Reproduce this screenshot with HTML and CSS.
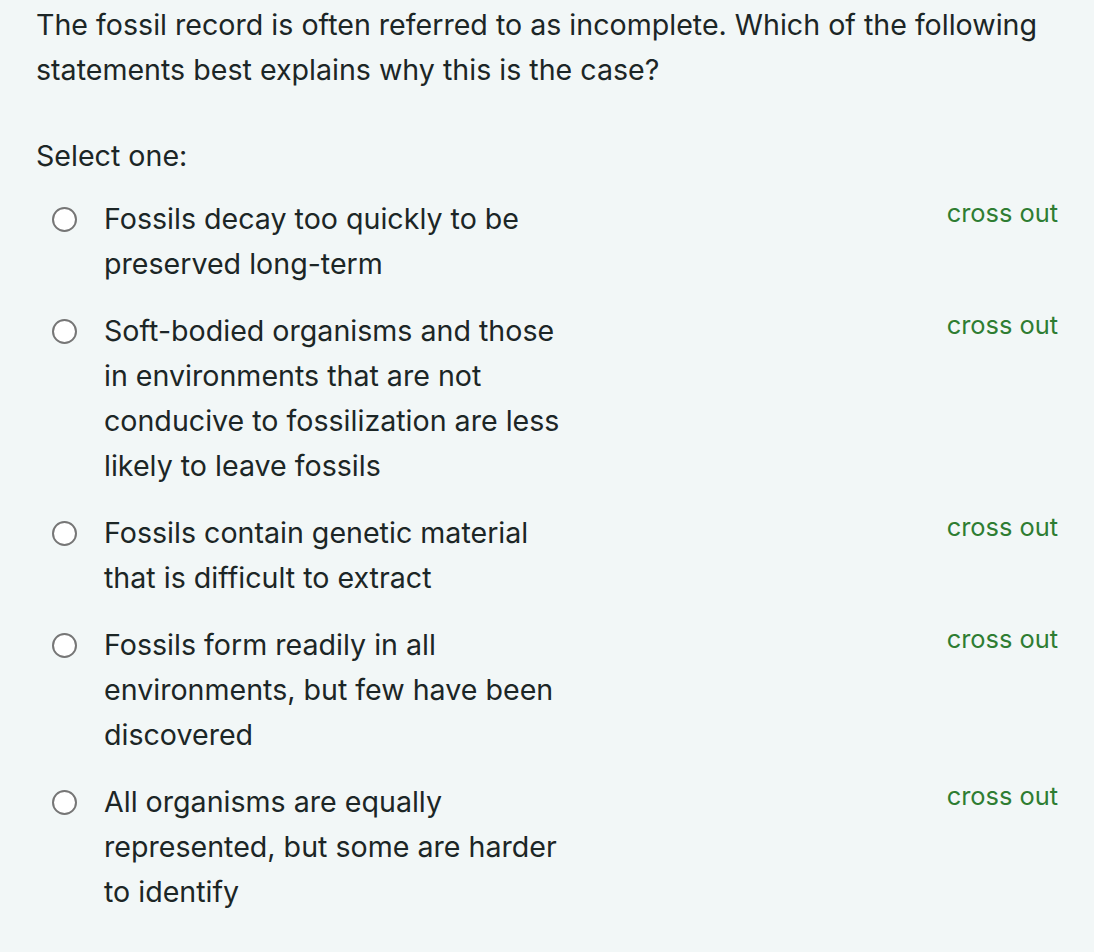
FILE: index.html
```html
<!DOCTYPE html>
<html>
<head>
<meta charset="utf-8">
<link rel="stylesheet" href="styles.css">
</head>
<body>
<div class="que">
  <div class="qtext">The fossil record is often referred to as incomplete. Which of the following statements best explains why this is the case?</div>
  <div class="prompt">Select one:</div>
  <div class="answers">
    <div class="opt">
      <span class="radio"></span>
      <div class="label">Fossils decay too quickly to be preserved long-term</div>
      <a class="cross">cross out</a>
    </div>
    <div class="opt">
      <span class="radio"></span>
      <div class="label">Soft-bodied organisms and those in environments that are not conducive to fossilization are less likely to leave fossils</div>
      <a class="cross">cross out</a>
    </div>
    <div class="opt">
      <span class="radio"></span>
      <div class="label">Fossils contain genetic material that is difficult to extract</div>
      <a class="cross">cross out</a>
    </div>
    <div class="opt">
      <span class="radio"></span>
      <div class="label">Fossils form readily in all environments, but few have been discovered</div>
      <a class="cross">cross out</a>
    </div>
    <div class="opt">
      <span class="radio"></span>
      <div class="label">All organisms are equally represented, but some are harder to identify</div>
      <a class="cross">cross out</a>
    </div>
  </div>
</div>
</body>
</html>
```
FILE: styles.css
```css
html, body {
  margin: 0;
  padding: 0;
  background: #f2f7f7;
}
body {
  font-family: Inter, "Noto Sans", sans-serif;
  color: #1c2626;
  font-size: 28.6px;
  line-height: 45px;
}
.que {
  padding: 2px 36px 0 36px;
}
.qtext {
  margin: 0;
}
.prompt {
  margin-top: 41px;
}
.answers {
  margin-top: 18px;
  display: flex;
  flex-direction: column;
  gap: 22px;
}
.opt {
  display: flex;
  align-items: flex-start;
}
.radio {
  flex: none;
  width: 21px;
  height: 21px;
  border: 2px solid #767676;
  border-radius: 50%;
  background: #ffffff;
  margin: 11px 0 0 16px;
}
.label {
  width: 462px;
  margin-left: 27px;
}
.cross {
  margin-left: auto;
  color: #2e7d32;
  font-size: 25.4px;
  line-height: 36px;
  margin-top: -1px;
}
```
